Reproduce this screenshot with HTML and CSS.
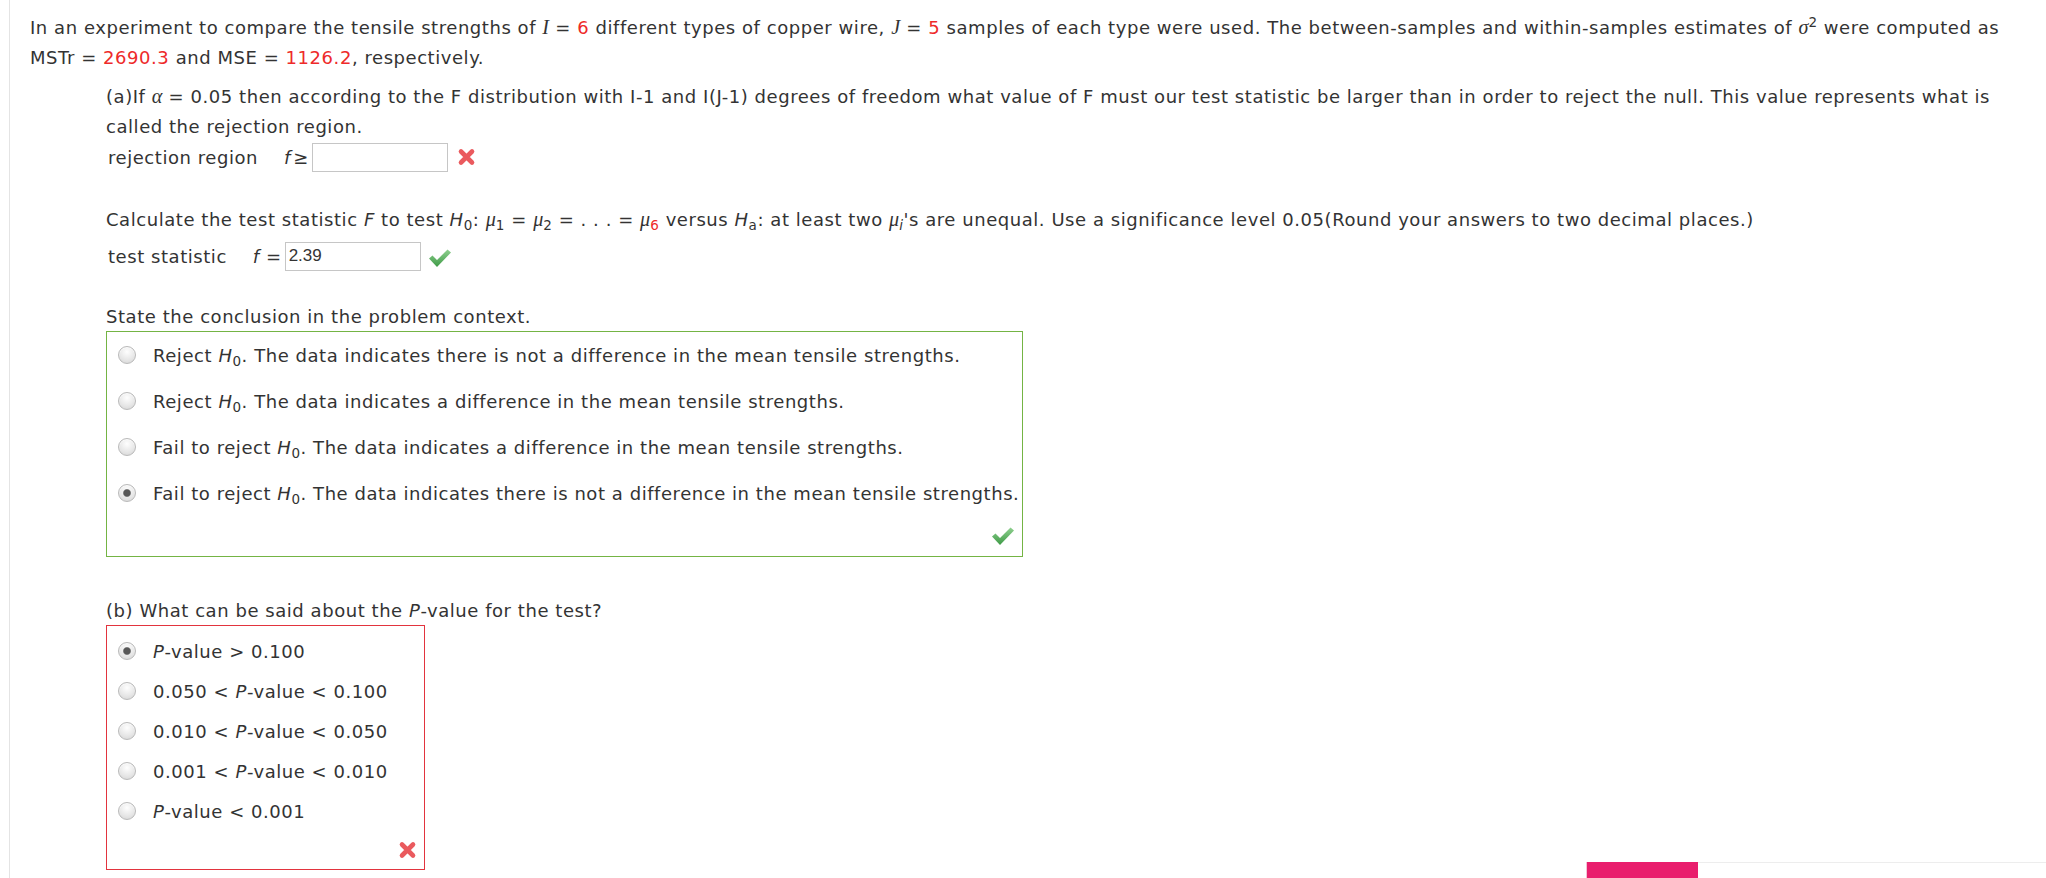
FILE: index.html
```html
<!DOCTYPE html>
<html lang="en">
<head>
    <meta charset="UTF-8">
    <title>Tensile strength of copper wire - ANOVA</title>
    <link rel="stylesheet" href="styles.css">
</head>
<body>
    <div class="page">
        <p class="intro">
            In an experiment to compare the tensile strengths of <i class="mv">I</i> = <span class="num">6</span> different types of copper wire, <i class="mv">J</i> = <span class="num">5</span> samples of each type were used. The between-samples and within-samples estimates of <i class="mv">σ</i><sup>2</sup> were computed as MSTr = <span class="num">2690.3</span> and MSE = <span class="num">1126.2</span>, respectively.
        </p>

        <div class="part">
            <p class="prompt">
                (a)If <i class="mv">α</i> = 0.05 then according to the F distribution with I-1 and I(J-1) degrees of freedom what value of F must our test statistic be larger than in order to reject the null. This value represents what is called the rejection region.
            </p>
            <div class="answer-row">
                <span class="label">rejection region</span>
                <span class="var"><i>f</i>&#8202;≥</span>
                <input class="field" type="text" value="">
                <svg class="icon icon-wrong" width="19" height="18" viewBox="0 0 19 18">
                    <path d="M4 3.5 L15 14.5 M15 3.5 L4 14.5" stroke="#ea5a5e" stroke-width="4.6" stroke-linecap="round"/>
                </svg>
            </div>

            <p class="prompt calc">
                Calculate the test statistic <i>F</i> to test <i>H</i><sub>0</sub>: <i class="mv">μ</i><sub>1</sub> = <i class="mv">μ</i><sub>2</sub> = . . . = <i class="mv">μ</i><sub class="num">6</sub> versus <i>H</i><sub>a</sub>: at least two <i class="mv">μ</i><sub><i>i</i></sub>'s are unequal. Use a significance level 0.05(Round your answers to two decimal places.)
            </p>
            <div class="answer-row answer-row-test">
                <span class="label">test statistic</span>
                <span class="var"><i>f</i> =</span>
                <input class="field" type="text" value="2.39">
                <svg class="icon icon-right" width="24" height="20" viewBox="0 0 24 20">
                    <defs>
                        <linearGradient id="checkA" x1="0" y1="0" x2="0" y2="1">
                            <stop offset="0" stop-color="#8fd08f"/>
                            <stop offset="1" stop-color="#3e9a46"/>
                        </linearGradient>
                    </defs>
                    <path d="M1 10.5 L4.5 7.5 L9 12 L19.5 1.5 L23 4.5 L9 19 Z" fill="url(#checkA)"/>
                </svg>
            </div>

            <p class="prompt state">State the conclusion in the problem context.</p>
            <div class="choices choices-right">
                <label class="choice"><input class="radio" type="radio" name="concl"><span>Reject <i>H</i><sub>0</sub>. The data indicates there is not a difference in the mean tensile strengths.</span></label>
                <label class="choice"><input class="radio" type="radio" name="concl"><span>Reject <i>H</i><sub>0</sub>. The data indicates a difference in the mean tensile strengths.</span></label>
                <label class="choice"><input class="radio" type="radio" name="concl"><span>Fail to reject <i>H</i><sub>0</sub>. The data indicates a difference in the mean tensile strengths.</span></label>
                <label class="choice"><input class="radio" type="radio" name="concl" checked><span>Fail to reject <i>H</i><sub>0</sub>. The data indicates there is not a difference in the mean tensile strengths.</span></label>
                <div class="feedback feedback-right">
                    <svg class="icon icon-right" width="24" height="20" viewBox="0 0 24 20">
                        <defs>
                            <linearGradient id="checkB" x1="0" y1="0" x2="0" y2="1">
                                <stop offset="0" stop-color="#8fd08f"/>
                                <stop offset="1" stop-color="#3e9a46"/>
                            </linearGradient>
                        </defs>
                        <path d="M1 10.5 L4.5 7.5 L9 12 L19.5 1.5 L23 4.5 L9 19 Z" fill="url(#checkB)"/>
                    </svg>
                </div>
            </div>

            <p class="prompt part-b">(b) What can be said about the <i>P</i>-value for the test?</p>
            <div class="choices choices-wrong">
                <label class="choice"><input class="radio" type="radio" name="pval" checked><span><i>P</i>-value &gt; 0.100</span></label>
                <label class="choice"><input class="radio" type="radio" name="pval"><span>0.050 &lt; <i>P</i>-value &lt; 0.100</span></label>
                <label class="choice"><input class="radio" type="radio" name="pval"><span>0.010 &lt; <i>P</i>-value &lt; 0.050</span></label>
                <label class="choice"><input class="radio" type="radio" name="pval"><span>0.001 &lt; <i>P</i>-value &lt; 0.010</span></label>
                <label class="choice"><input class="radio" type="radio" name="pval"><span><i>P</i>-value &lt; 0.001</span></label>
                <div class="feedback feedback-wrong">
                    <svg class="icon icon-wrong" width="19" height="18" viewBox="0 0 19 18">
                        <path d="M4 3.5 L15 14.5 M15 3.5 L4 14.5" stroke="#ea5a5e" stroke-width="4.6" stroke-linecap="round"/>
                    </svg>
                </div>
            </div>
        </div>

        <div class="toolbar">
            <button class="submit-btn" type="button"></button>
            <div class="toolbar-line"></div>
        </div>
    </div>
</body>
</html>
```

FILE: styles.css
```css
html, body {
    margin: 0;
    padding: 0;
    overflow: hidden;
}

body {
    font-family: "DejaVu Sans", Verdana, sans-serif;
    font-size: 18px;
    letter-spacing: 0.55px;
    color: #333;
    background: #fff;
}

.page {
    margin-left: 9px;
    border-left: 1px solid #e4e4e4;
    padding: 12px 26px 0 20px;
    height: 878px;
    box-sizing: border-box;
}

p {
    margin: 0;
    line-height: 30px;
}

.num {
    color: #ee2a2a;
}

/* math letters */
.mv {
    font-family: "Liberation Serif", "Times New Roman", serif;
    font-style: italic;
    font-size: 1.12em;
    letter-spacing: 0;
}

sub, sup {
    font-size: 0.75em;
    line-height: 0;
}

sub {
    vertical-align: -0.3em;
}

sup {
    vertical-align: 0.55em;
}

.part {
    margin-left: 76px;
}

.prompt {
    margin-top: 8px;
}

.answer-row {
    display: flex;
    align-items: center;
    height: 30px;
    padding-left: 2px;
}

.label {
    margin-right: 26px;
}

.var {
    margin-right: 3px;
}

.field {
    width: 136px;
    height: 29px;
    box-sizing: border-box;
    margin: 0;
    padding: 0 3px;
    border: 1px solid #c6c6c6;
    font-family: "Liberation Sans", Arial, sans-serif;
    font-size: 17px;
    color: #333;
    background: #fff;
}

.icon {
    display: block;
    flex: none;
}

.answer-row .icon-wrong {
    margin-left: 9px;
}

.answer-row .icon-right {
    margin-left: 7px;
    margin-top: 4px;
}

.calc {
    margin-top: 32px;
}

.answer-row-test {
    margin-top: 6px;
}

.state {
    margin-top: 32px;
    line-height: 28px;
}

.choices {
    box-sizing: border-box;
    padding-left: 11px;
}

.choices-right {
    width: 917px;
    border: 1px solid #74b444;
    padding-top: 0;
}

.choices-wrong {
    width: 319px;
    border: 1px solid #e2343e;
    padding-top: 5px;
}

.choice {
    display: flex;
    align-items: center;
    gap: 17px;
    height: 46px;
    white-space: nowrap;
}

.choices-wrong .choice {
    height: 40px;
}

.radio {
    appearance: none;
    -webkit-appearance: none;
    flex: none;
    width: 18px;
    height: 18px;
    margin: 0;
    border-radius: 50%;
    border: 1px solid #b9b9b9;
    background: radial-gradient(circle at 50% 30%, #fefefe 0%, #e6e6e6 60%, #d2d2d2 100%);
    box-shadow: inset 0 1px 1px rgba(255, 255, 255, 0.8);
}

.radio:checked {
    background:
        radial-gradient(circle, #575757 0, #575757 3.2px, rgba(87, 87, 87, 0) 4.4px),
        radial-gradient(circle at 50% 30%, #fefefe 0%, #e6e6e6 60%, #d2d2d2 100%);
}

.feedback {
    display: flex;
    justify-content: flex-end;
    align-items: center;
    padding-right: 7px;
}

.feedback-right {
    height: 40px;
}

.feedback-wrong {
    height: 38px;
}

.part-b {
    margin-top: 40px;
    line-height: 28px;
}

/* bottom toolbar, cut off by the window */
.toolbar {
    display: flex;
    justify-content: flex-end;
    margin-top: -8px;
    margin-right: -26px;
    height: 17px;
}

.submit-btn {
    width: 112px;
    height: 17px;
    border: none;
    border-left: 1px solid #f2c4d5;
    background: #e91e6d;
    padding: 0;
}

.toolbar-line {
    width: 348px;
    border-top: 1px solid #ededed;
}
```
